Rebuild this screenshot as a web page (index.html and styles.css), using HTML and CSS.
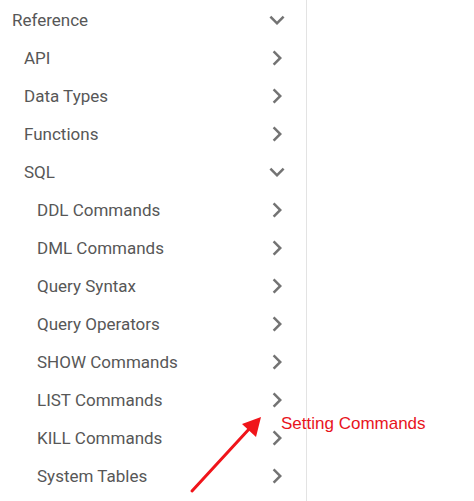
FILE: index.html
```html
<!DOCTYPE html>
<html>
<head>
<meta charset="utf-8">
<link rel="stylesheet" href="styles.css">
</head>
<body>
<nav class="sidebar">
  <div class="row l0"><span class="label">Reference</span><svg class="ico" viewBox="0 0 24 24"><path d="M16.59 8.59L12 13.17 7.41 8.59 6 10l6 6 6-6z"/></svg></div>
  <div class="row l1"><span class="label">API</span><svg class="ico" viewBox="0 0 24 24"><path d="M10 6L8.59 7.41 13.17 12l-4.58 4.59L10 18l6-6z"/></svg></div>
  <div class="row l1"><span class="label">Data Types</span><svg class="ico" viewBox="0 0 24 24"><path d="M10 6L8.59 7.41 13.17 12l-4.58 4.59L10 18l6-6z"/></svg></div>
  <div class="row l1"><span class="label">Functions</span><svg class="ico" viewBox="0 0 24 24"><path d="M10 6L8.59 7.41 13.17 12l-4.58 4.59L10 18l6-6z"/></svg></div>
  <div class="row l1"><span class="label">SQL</span><svg class="ico" viewBox="0 0 24 24"><path d="M16.59 8.59L12 13.17 7.41 8.59 6 10l6 6 6-6z"/></svg></div>
  <div class="row l2"><span class="label">DDL Commands</span><svg class="ico" viewBox="0 0 24 24"><path d="M10 6L8.59 7.41 13.17 12l-4.58 4.59L10 18l6-6z"/></svg></div>
  <div class="row l2"><span class="label">DML Commands</span><svg class="ico" viewBox="0 0 24 24"><path d="M10 6L8.59 7.41 13.17 12l-4.58 4.59L10 18l6-6z"/></svg></div>
  <div class="row l2"><span class="label">Query Syntax</span><svg class="ico" viewBox="0 0 24 24"><path d="M10 6L8.59 7.41 13.17 12l-4.58 4.59L10 18l6-6z"/></svg></div>
  <div class="row l2"><span class="label">Query Operators</span><svg class="ico" viewBox="0 0 24 24"><path d="M10 6L8.59 7.41 13.17 12l-4.58 4.59L10 18l6-6z"/></svg></div>
  <div class="row l2"><span class="label">SHOW Commands</span><svg class="ico" viewBox="0 0 24 24"><path d="M10 6L8.59 7.41 13.17 12l-4.58 4.59L10 18l6-6z"/></svg></div>
  <div class="row l2"><span class="label">LIST Commands</span><svg class="ico" viewBox="0 0 24 24"><path d="M10 6L8.59 7.41 13.17 12l-4.58 4.59L10 18l6-6z"/></svg></div>
  <div class="row l2"><span class="label">KILL Commands</span><svg class="ico" viewBox="0 0 24 24"><path d="M10 6L8.59 7.41 13.17 12l-4.58 4.59L10 18l6-6z"/></svg></div>
  <div class="row l2"><span class="label">System Tables</span><svg class="ico" viewBox="0 0 24 24"><path d="M10 6L8.59 7.41 13.17 12l-4.58 4.59L10 18l6-6z"/></svg></div>
</nav>
<div class="note">Setting Commands</div>
<svg class="arrow" width="474" height="501" viewBox="0 0 474 501">
  <line x1="192" y1="491" x2="250" y2="428" stroke="#f0141a" stroke-width="3" stroke-linecap="round"/>
  <polygon points="261,417 256,437 242,424" fill="#f0141a"/>
</svg>
</body>
</html>
```
FILE: styles.css
```css
html, body {
  margin: 0;
  padding: 0;
  background: #ffffff;
}
body {
  position: relative;
  width: 474px;
  height: 501px;
  overflow: hidden;
  font-family: Roboto, "Liberation Sans", sans-serif;
}
.sidebar {
  width: 306px;
  height: 501px;
  border-right: 1px solid #e3e3e3;
  box-sizing: content-box;
  padding-top: 1px;
}
.row {
  height: 38px;
  display: flex;
  align-items: center;
  justify-content: space-between;
  padding-right: 14px;
  box-sizing: border-box;
}
.label {
  font-size: 17px;
  color: #575757;
  font-weight: 400;
}
.l0 { padding-left: 12px; }
.l1 { padding-left: 24px; }
.l2 { padding-left: 37px; }
.ico {
  width: 30px;
  height: 30px;
  fill: #737373;
  flex: none;
}
.note {
  position: absolute;
  left: 281px;
  top: 414px;
  font-family: "Liberation Sans", Arial, sans-serif;
  font-size: 17px;
  color: #e8141c;
}
.arrow {
  position: absolute;
  left: 0;
  top: 0;
  pointer-events: none;
}
```
